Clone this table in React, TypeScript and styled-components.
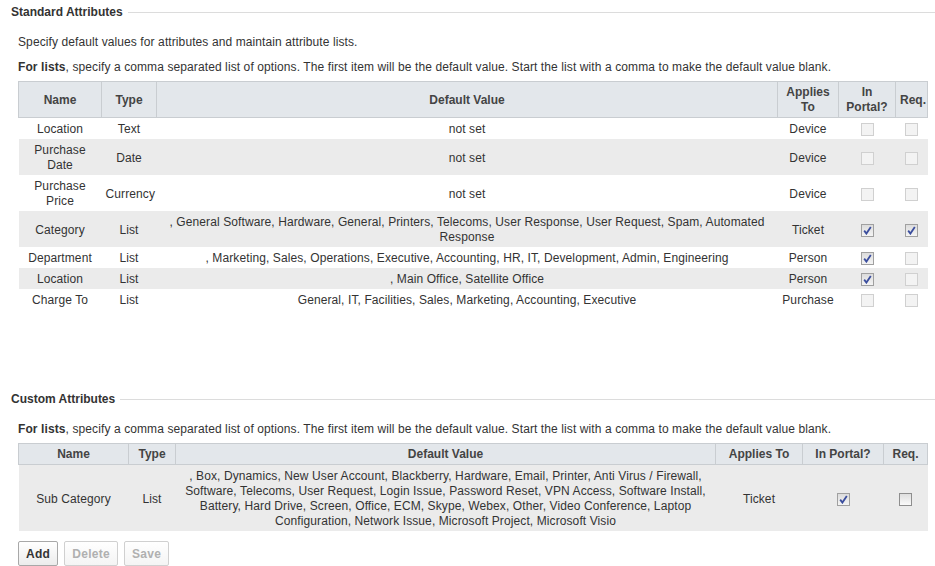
import React from "react";
import styled, { createGlobalStyle, css } from "styled-components";

const GlobalStyle = createGlobalStyle`
  html, body { margin: 0; padding: 0; background: #ffffff; }
  body {
    font-family: "Liberation Sans", Arial, sans-serif;
    font-size: 12px;
    line-height: 15px;
    letter-spacing: 0.1px;
    color: #333333;
  }
`;

const Page = styled.div`
  width: 935px;
  display: flex;
  flex-direction: column;
`;

const Section = styled.section<{ $gapTop?: number }>`
  display: flex;
  flex-direction: column;
  margin-top: ${(p) => p.$gapTop ?? 0}px;
`;

const Legend = styled.div`
  display: flex;
  align-items: center;
  height: 24px;
  padding-left: 11px;
  gap: 5px;
`;

const LegendTitle = styled.span`
  font-weight: bold;
  color: #333333;
  white-space: nowrap;
  letter-spacing: 0;
`;

const LegendRule = styled.span`
  flex: 1;
  height: 0;
  border-top: 1px solid #dcdcdc;
`;

const Body = styled.div`
  display: flex;
  flex-direction: column;
  padding: 0 8px 0 18px;
`;

const Note = styled.p<{ $top: number }>`
  margin: ${(p) => p.$top}px 0 0;
  color: #333333;
`;

const Table = styled.table<{ $top: number }>`
  width: 909px;
  table-layout: fixed;
  border-collapse: collapse;
  margin-top: ${(p) => p.$top}px;
`;

const Th = styled.th`
  background: #e3e7eb;
  border: 1px solid #c9cdd1;
  color: #444444;
  font-weight: bold;
  letter-spacing: 0;
  padding: 3px 4px 2px;
  text-align: center;
  vertical-align: middle;
`;

const Tr = styled.tr<{ $alt?: boolean }>`
  background: ${(p) => (p.$alt ? "#ebebeb" : "#ffffff")};
`;

const Td = styled.td`
  padding: 4px 4px 2px;
  text-align: center;
  vertical-align: middle;
  color: #333333;
`;

const Box = styled.span<{ $checked?: boolean; $enabled?: boolean }>`
  display: inline-flex;
  align-items: center;
  justify-content: center;
  box-sizing: border-box;
  width: 13px;
  height: 13px;
  vertical-align: middle;
  border: 1px solid #d0d0d0;
  background: #f3f3f3;
  ${(p) =>
    p.$checked &&
    css`
      border-color: #a0a0a0;
      background: linear-gradient(#dcdcdc, #f4f4f4);
    `}
  ${(p) =>
    p.$enabled &&
    !p.$checked &&
    css`
      border-color: #8e8e8e;
      background: linear-gradient(#dedede, #fafafa);
    `}
`;

const Check: React.FC<{ checked?: boolean; enabled?: boolean }> = ({ checked, enabled }) => (
  <Box $checked={checked} $enabled={enabled}>
    {checked && (
      <svg width="9" height="9" viewBox="0 0 9 9">
        <path d="M1.2 4.6 L3.4 7.6 L7.8 1" fill="none" stroke="#3b4e9e" strokeWidth="1.8" />
      </svg>
    )}
  </Box>
);

const ButtonBar = styled.div`
  display: flex;
  gap: 6px;
  margin-top: 10px;
`;

const Button = styled.button`
  font-family: "Liberation Sans", Arial, sans-serif;
  font-size: 12px;
  font-weight: bold;
  letter-spacing: 0.3px;
  height: 25px;
  padding: 0 7px;
  color: #333333;
  border: 1px solid #a8a8a8;
  border-radius: 2px;
  background: linear-gradient(#ffffff, #ececec);
  &:disabled {
    color: #b0b0b0;
    border-color: #d0d0d0;
    background: linear-gradient(#ffffff, #f4f4f4);
  }
`;

type Row = { name: string; type: string; value: string; applies: string; portal: boolean; req: boolean };

const standardRows: Row[] = [
  { name: "Location", type: "Text", value: "not set", applies: "Device", portal: false, req: false },
  { name: "Purchase Date", type: "Date", value: "not set", applies: "Device", portal: false, req: false },
  { name: "Purchase Price", type: "Currency", value: "not set", applies: "Device", portal: false, req: false },
  {
    name: "Category",
    type: "List",
    value: ", General Software, Hardware, General, Printers, Telecoms, User Response, User Request, Spam, Automated Response",
    applies: "Ticket",
    portal: true,
    req: true,
  },
  {
    name: "Department",
    type: "List",
    value: ", Marketing, Sales, Operations, Executive, Accounting, HR, IT, Development, Admin, Engineering",
    applies: "Person",
    portal: true,
    req: false,
  },
  { name: "Location", type: "List", value: ", Main Office, Satellite Office", applies: "Person", portal: true, req: false },
  {
    name: "Charge To",
    type: "List",
    value: "General, IT, Facilities, Sales, Marketing, Accounting, Executive",
    applies: "Purchase",
    portal: false,
    req: false,
  },
];

const customValue =
  ", Box, Dynamics, New User Account, Blackberry, Hardware, Email, Printer, Anti Virus / Firewall, Software, Telecoms, User Request, Login Issue, Password Reset, VPN Access, Software Install, Battery, Hard Drive, Screen, Office, ECM, Skype, Webex, Other, Video Conference, Laptop Configuration, Network Issue, Microsoft Project, Microsoft Visio";

const ListsNote: React.FC<{ top: number }> = ({ top }) => (
  <Note $top={top}>
    <b>For lists</b>, specify a comma separated list of options. The first item will be the default value. Start the
    list with a comma to make the default value blank.
  </Note>
);

export default function App() {
  return (
    <Page>
      <GlobalStyle />
      <Section>
        <Legend>
          <LegendTitle>Standard Attributes</LegendTitle>
          <LegendRule />
        </Legend>
        <Body>
          <Note $top={11}>Specify default values for attributes and maintain attribute lists.</Note>
          <ListsNote top={10} />
          <Table $top={6}>
            <colgroup>
              <col style={{ width: 83 }} />
              <col style={{ width: 55 }} />
              <col style={{ width: 621 }} />
              <col style={{ width: 61 }} />
              <col style={{ width: 57 }} />
              <col style={{ width: 32 }} />
            </colgroup>
            <thead>
              <tr>
                <Th>Name</Th>
                <Th>Type</Th>
                <Th>Default Value</Th>
                <Th>Applies To</Th>
                <Th>In Portal?</Th>
                <Th>Req.</Th>
              </tr>
            </thead>
            <tbody>
              {standardRows.map((r, i) => (
                <Tr key={i} $alt={i % 2 === 1}>
                  <Td>{r.name}</Td>
                  <Td>{r.type}</Td>
                  <Td>{r.value}</Td>
                  <Td>{r.applies}</Td>
                  <Td>
                    <Check checked={r.portal} />
                  </Td>
                  <Td>
                    <Check checked={r.req} />
                  </Td>
                </Tr>
              ))}
            </tbody>
          </Table>
        </Body>
      </Section>

      <Section $gapTop={77}>
        <Legend>
          <LegendTitle>Custom Attributes</LegendTitle>
          <LegendRule />
        </Legend>
        <Body>
          <ListsNote top={11} />
          <Table $top={6}>
            <colgroup>
              <col style={{ width: 110 }} />
              <col style={{ width: 47 }} />
              <col style={{ width: 540 }} />
              <col style={{ width: 87 }} />
              <col style={{ width: 81 }} />
              <col style={{ width: 44 }} />
            </colgroup>
            <thead>
              <tr>
                <Th>Name</Th>
                <Th>Type</Th>
                <Th>Default Value</Th>
                <Th>Applies To</Th>
                <Th>In Portal?</Th>
                <Th>Req.</Th>
              </tr>
            </thead>
            <tbody>
              <Tr $alt>
                <Td>Sub Category</Td>
                <Td>List</Td>
                <Td>{customValue}</Td>
                <Td>Ticket</Td>
                <Td>
                  <Check checked enabled />
                </Td>
                <Td>
                  <Check enabled />
                </Td>
              </Tr>
            </tbody>
          </Table>
          <ButtonBar>
            <Button>Add</Button>
            <Button disabled>Delete</Button>
            <Button disabled>Save</Button>
          </ButtonBar>
        </Body>
      </Section>
    </Page>
  );
}
